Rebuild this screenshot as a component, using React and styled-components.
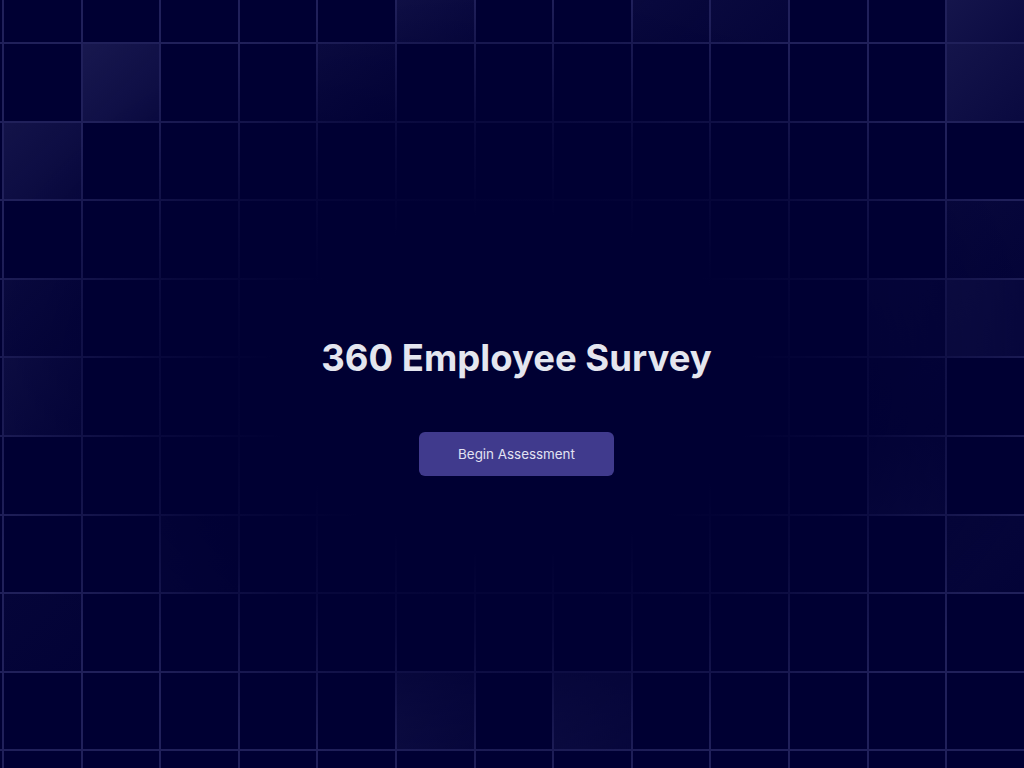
import React from "react";
import styled, { createGlobalStyle } from "styled-components";

const GlobalStyle = createGlobalStyle`
  html, body { margin: 0; padding: 0; background: #000033; }
  body { font-family: Inter, "Noto Sans", sans-serif; }
  * { box-sizing: border-box; }
`;

const PITCH = 78.6;
const GAP = 2;
const COLS = 14;
const ROWS = 11;

const Page = styled.main`
  position: relative;
  width: 100vw;
  height: 100vh;
  min-height: 768px;
  overflow: hidden;
  background: #000033;
`;

const Backdrop = styled.div`
  position: absolute;
  inset: 0;
  pointer-events: none;
`;

const TileGrid = styled.div`
  position: absolute;
  left: ${4 - PITCH - GAP / 2}px;
  top: ${44 - PITCH - GAP / 2}px;
  display: grid;
  grid-template-columns: repeat(${COLS}, ${PITCH - GAP}px);
  grid-template-rows: repeat(${ROWS}, ${PITCH - GAP}px);
  gap: ${GAP}px;
  padding: ${GAP / 2}px;
  background: #20205a;
`;

const Tile = styled.div`
  background: ${({ $glow }) =>
    $glow
      ? `linear-gradient(${$glow.angle || 135}deg, rgba(85,85,150,${$glow.a}) 0%, rgba(60,60,130,${$glow.a * 0.65}) 100%), #000033`
      : "#000033"};
`;

const Vignette = styled.div`
  position: absolute;
  inset: 0;
  background: radial-gradient(
    ellipse 62% 58% at 50% 50%,
    #000033 0%,
    #000033 38%,
    rgba(0, 0, 51, 0.75) 58%,
    rgba(0, 0, 51, 0) 88%
  );
`;

const Content = styled.section`
  position: relative;
  z-index: 1;
  height: 100%;
  display: flex;
  flex-direction: column;
  align-items: center;
  justify-content: center;
  padding: 44px 0 0 9px;
`;

const Title = styled.h1`
  margin: 0;
  font-family: Inter, "Noto Sans", sans-serif;
  font-weight: 700;
  font-size: 36.5px;
  line-height: 44px;
  letter-spacing: 0;
  color: #e4e6ef;
`;

const StartButton = styled.button`
  margin-top: 52px;
  width: 195px;
  height: 44px;
  border: none;
  border-radius: 6px;
  background: #403a8d;
  color: #e2e2f2;
  font-family: Inter, "Noto Sans", sans-serif;
  font-size: 13.4px;
  font-weight: 400;
  cursor: pointer;
`;

const glows = {
  "0-6": { a: 0.2 },
  "0-9": { a: 0.12 },
  "0-10": { a: 0.12 },
  "0-13": { a: 0.28 },
  "1-2": { a: 0.28 },
  "1-5": { a: 0.14 },
  "1-13": { a: 0.24 },
  "2-1": { a: 0.22 },
  "3-13": { a: 0.09 },
  "4-1": { a: 0.12 },
  "4-12": { a: 0.14, angle: 90 },
  "4-13": { a: 0.2, angle: 90 },
  "5-1": { a: 0.18 },
  "5-12": { a: 0.08 },
  "6-12": { a: 0.14, angle: 60 },
  "7-3": { a: 0.08 },
  "7-13": { a: 0.08 },
  "8-1": { a: 0.06 },
  "9-6": { a: 0.18 },
  "9-8": { a: 0.18 },
};

export default function App() {
  const tiles = [];
  for (let r = 0; r < ROWS; r++) {
    for (let c = 0; c < COLS; c++) {
      const key = `${r}-${c}`;
      tiles.push(<Tile key={key} $glow={glows[key]} />);
    }
  }
  return (
    <>
      <GlobalStyle />
      <Page>
        <Backdrop>
          <TileGrid>{tiles}</TileGrid>
          <Vignette />
        </Backdrop>
        <Content>
          <Title>360 Employee Survey</Title>
          <StartButton>Begin Assessment</StartButton>
        </Content>
      </Page>
    </>
  );
}
